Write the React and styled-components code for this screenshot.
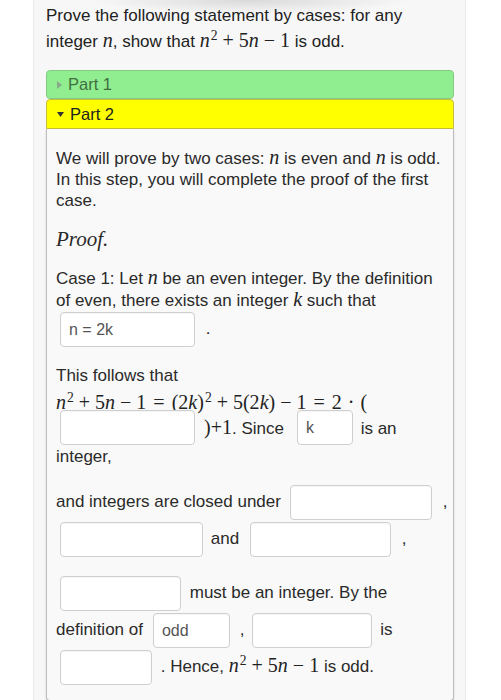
import React from "react";
import styled, { createGlobalStyle } from "styled-components";

const Global = createGlobalStyle`
  html, body { margin: 0; padding: 0; background: #ffffff; overflow: hidden; }
  body { font-family: "Liberation Sans", Arial, sans-serif; }
`;

const Page = styled.div`
  box-sizing: border-box;
  width: 433px;
  min-height: 700px;
  margin: 0 0 0 33px;
  padding: 3px 11px 0 12px;
  background-color: #f7f7f7;
  background-image: radial-gradient(ellipse 160px 14px at 50% 0, rgba(0, 0, 0, 0.12), rgba(0, 0, 0, 0));
  border-left: 1px solid #e9e9e9;
  border-right: 1px solid #e9e9e9;
`;

const Title = styled.div`
  font-size: 17px;
  line-height: 25px;
  color: #222;
  white-space: nowrap;
`;

const Accordion = styled.div`
  margin-top: 16px;
  display: flex;
  flex-direction: column;
`;

const Header = styled.div`
  box-sizing: border-box;
  height: ${(p) => (p.$open ? "30px" : "29px")};
  display: flex;
  align-items: center;
  gap: 6px;
  padding: 0 10px;
  font-size: 16.5px;
  color: ${(p) => p.$color};
  background: ${(p) => p.$bg};
  border: 1px solid ${(p) => p.$border};
  border-radius: ${(p) => (p.$open ? "4px 4px 0 0" : "4px")};
`;

const Body = styled.div`
  border: 1px solid #bdbdbd;
  border-top: none;
  border-radius: 0 0 4px 4px;
  background: #f9f9f9;
  padding: 1px 9px 0 9px;
  box-shadow: 0 1px 2px rgba(0, 0, 0, 0.15);
`;

const Para = styled.p`
  margin: ${(p) => p.$mt ?? 17}px 0 ${(p) => p.$mb ?? 17}px;
  font-size: 17px;
  line-height: 21px;
  color: #2a2a2a;
  white-space: nowrap;
`;

const ProofLabel = styled.p`
  margin: 17px 0;
  font-family: "Liberation Serif", "Times New Roman", serif;
  font-style: italic;
  font-size: 21px;
  line-height: 22px;
  color: #2a2a2a;
`;

const M = styled.span`
  font-family: "Liberation Serif", "Times New Roman", serif;
  font-size: 20px;
  font-style: ${(p) => (p.$upright ? "normal" : "italic")};
  color: #222;
`;

const Sup = styled.sup`
  font-size: 68%;
  line-height: 0;
  vertical-align: 0.5em;
  font-style: normal;
  margin-left: 1px;
`;

const Op = styled.span`
  font-style: normal;
  margin: 0 ${(p) => p.$space ?? 0.25}em;
`;

const Num = styled.span`
  font-style: normal;
`;

const MathLine = styled.span`
  display: inline-block;
  padding-top: 6px;
  line-height: 21px;
`;

const Field = styled.input`
  box-sizing: border-box;
  width: ${(p) => p.$w}px;
  height: 35px;
  margin: ${(p) => p.$mt ?? 1}px ${(p) => p.$mr ?? 5}px 1px ${(p) => p.$ml ?? 4}px;
  padding: 0 8px;
  vertical-align: middle;
  border: 1px solid #cfcfcf;
  border-radius: 4px;
  background: #fff;
  box-shadow: inset 0 1px 1px rgba(0, 0, 0, 0.04);
  font-family: "Liberation Sans", Arial, sans-serif;
  font-size: 16px;
  color: #555;
  outline: none;
`;

const Arrow = ({ open, color }) =>
  open ? (
    <svg width="7" height="5" viewBox="0 0 7 5">
      <path d="M0 0 L7 0 L3.5 5 Z" fill={color} />
    </svg>
  ) : (
    <svg width="5" height="8" viewBox="0 0 5 8">
      <path d="M0 0 L5 4 L0 8 Z" fill={color} />
    </svg>
  );

const Poly = () => (
  <>
    n<Sup>2</Sup>
    <Op>+</Op>
    <Num>5</Num>n<Op>−</Op>
    <Num>1</Num>
  </>
);

export default function App() {
  return (
    <>
      <Global />
      <Page>
        <Title>
          Prove the following statement by cases: for any
          <br />
          integer <M>n</M>, show that{" "}
          <M>
            <Poly />
          </M>{" "}
          is odd.
        </Title>
        <Accordion>
          <Header $bg="#90ee90" $border="#86c986" $color="#3f6f3f">
            <Arrow color="#8aa88a" />
            Part 1
          </Header>
          <div>
            <Header $open $bg="#ffff00" $border="#c6bd3a" $color="#222">
              <Arrow open color="#333" />
              Part 2
            </Header>
            <Body>
              <Para>
                We will prove by two cases: <M>n</M> is even and <M>n</M> is odd.
                <br />
                In this step, you will complete the proof of the first
                <br />
                case.
              </Para>
              <ProofLabel>Proof.</ProofLabel>
              <Para>
                Case 1: Let <M>n</M> be an even integer. By the definition
                <br />
                of even, there exists an integer <M>k</M> such that
                <br />
                <Field $w={135} $mr={6} defaultValue="n = 2k" readOnly /> .
              </Para>
              <Para>
                This follows that
                <br />
                <MathLine>
                  <M>
                    <Poly />
                    <Op $space={0.35}>=</Op>
                    <Num>(2</Num>k<Num>)</Num>
                    <Sup>2</Sup>
                    <Op>+</Op>
                    <Num>5(2</Num>k<Num>)</Num>
                    <Op>−</Op>
                    <Num>1</Num>
                    <Op $space={0.35}>=</Op>
                    <Num>2</Num>
                    <Op $space={0.3}>·</Op>
                    <Num>(</Num>
                  </M>
                </MathLine>
                <br />
                <Field $w={135} $mt={-4} $mr={9} readOnly />
                <M $upright>)+1</M>. Since
                <Field $w={56} $mt={-4} $ml={13} $mr={3} defaultValue="k" readOnly /> is an
                <br />
                integer,
              </Para>
              <Para>
                and integers are closed under
                <Field $w={142} $ml={9} $mr={6} readOnly /> ,
                <br />
                <Field $w={143} $mr={3} readOnly /> and
                <Field $w={141} $ml={11} $mr={6} readOnly /> ,
              </Para>
              <Para $mt={15} $mb={14}>
                <Field $w={121} $mr={4} readOnly /> must be an integer. By the
                <br />
                definition of
                <Field $w={77} $ml={10} $mr={5} defaultValue="odd" readOnly /> ,
                <Field $w={120} $ml={8} $mr={3} readOnly /> is
                <br />
                <Field $w={92} $mr={4} readOnly /> . Hence,{" "}
                <M>
                  <Poly />
                </M>{" "}
                is odd.
              </Para>
            </Body>
          </div>
        </Accordion>
      </Page>
    </>
  );
}
